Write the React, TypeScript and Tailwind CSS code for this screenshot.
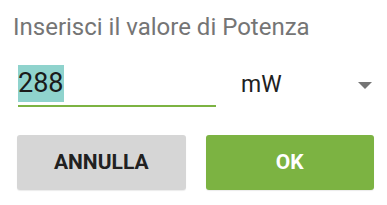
import React from 'react';

const App: React.FC = () => {
  return (
    <div className="w-[387px] h-[205px] bg-white font-['Roboto',sans-serif] overflow-hidden">
      <div className="pl-[13px] pt-[13px] text-[24px] leading-[28px] text-[#757575]">Inserisci il valore di Potenza</div>
      <div className="flex items-start mt-[24px] pl-[18px] pr-[14px]">
        <div className="w-[198px]">
          <div className="h-[37px] flex items-center">
            <span className="bg-[#8fd3cd] text-[#1a1a1a] text-[27px] leading-[37px] h-[37px]">288</span>
          </div>
          <div className="mt-[3px] h-[2px] bg-[#7cb342]" />
        </div>
        <div className="flex-1 flex items-center justify-between pl-[25px] h-[37px] mt-[2px]">
          <span className="text-[23px] text-[#212121]">mW</span>
          <svg width="14" height="7" viewBox="0 0 14 7" className="mr-[1px]">
            <path d="M0 0h14L7 7z" fill="#757575" />
          </svg>
        </div>
      </div>
      <div className="flex gap-[20px] mt-[28px] pl-[17px] pr-[13px]">
        <button className="flex-1 h-[55px] rounded-[3px] bg-[#d6d6d6] text-[#212121] font-bold text-[21px] shadow-[0_1px_1px_rgba(0,0,0,0.08)]">ANNULLA</button>
        <button className="flex-1 h-[55px] rounded-[3px] bg-[#7cb342] text-white font-bold text-[21px] shadow-[0_1px_1px_rgba(0,0,0,0.08)]">OK</button>
      </div>
    </div>
  );
};

export default App;
